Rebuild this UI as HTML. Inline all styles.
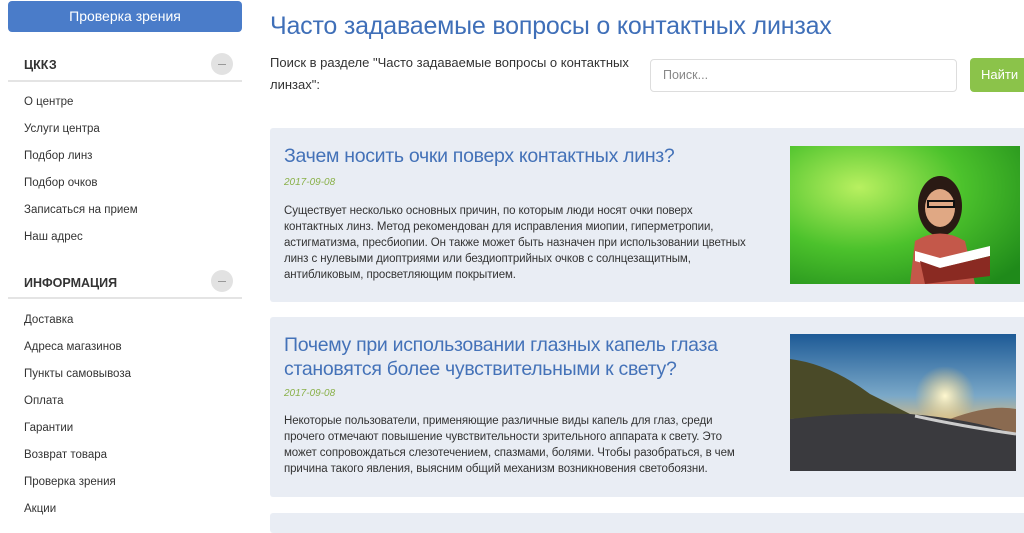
<!DOCTYPE html>
<html><head><meta charset="utf-8"><style>
*{margin:0;padding:0;box-sizing:border-box}
body{width:1024px;height:518px;overflow:hidden;background:#fff;font-family:"Liberation Sans",sans-serif;color:#333;position:relative}
.a{position:absolute;white-space:nowrap}
.btn{left:8px;top:1px;width:234px;height:31px;background:#4a7cc9;border-radius:4px;color:#fff;font-size:14px;text-align:center;line-height:30px}
.h{left:24px;font-size:12.5px;font-weight:bold;color:#333}
.c{width:22px;height:22px;border-radius:50%;background:#e2e2e2;left:211px}
.c:after{content:"";position:absolute;left:7px;top:10.5px;width:8px;height:1px;background:#999}
.ln{left:8px;width:234px;height:2px;background:#e4e4e4}
.it{left:24px;font-size:11.5px;color:#333}
.card{left:270px;width:760px;background:#e9edf4;border-radius:3px}
.t{font-size:19.5px;color:#4472b8;letter-spacing:-0.3px}
.d{font-size:10px;color:#8ab14a;font-style:italic}
.p{font-size:11.5px;line-height:16px;color:#333;letter-spacing:-0.1px}
</style></head><body>
<div class="a btn">Проверка зрения</div>
<div class="a h" style="top:58px">ЦККЗ</div>
<div class="a c" style="top:53px"></div>
<div class="a ln" style="top:80px"></div>
<div class="a it" style="top:96px">О центре</div>
<div class="a it" style="top:123px">Услуги центра</div>
<div class="a it" style="top:150px">Подбор линз</div>
<div class="a it" style="top:177px">Подбор очков</div>
<div class="a it" style="top:204px">Записаться на прием</div>
<div class="a it" style="top:231px">Наш адрес</div>
<div class="a h" style="top:276px">ИНФОРМАЦИЯ</div>
<div class="a c" style="top:270px"></div>
<div class="a ln" style="top:297px"></div>
<div class="a it" style="top:314px">Доставка</div>
<div class="a it" style="top:341px">Адреса магазинов</div>
<div class="a it" style="top:368px">Пункты самовывоза</div>
<div class="a it" style="top:395px">Оплата</div>
<div class="a it" style="top:422px">Гарантии</div>
<div class="a it" style="top:449px">Возврат товара</div>
<div class="a it" style="top:476px">Проверка зрения</div>
<div class="a it" style="top:503px">Акции</div>

<div class="a" style="left:270px;top:12px;font-size:25px;color:#3f6fb8;letter-spacing:-0.2px">Часто задаваемые вопросы о контактных линзах</div>
<div class="a" style="left:270px;top:52px;font-size:13px;line-height:22px;color:#333;white-space:normal;width:380px">Поиск в разделе "Часто задаваемые вопросы о контактных линзах":</div>
<div class="a" style="left:650px;top:59px;width:307px;height:33px;border:1px solid #ddd;border-radius:4px;font-size:12.5px;color:#888;padding:8px 12px">Поиск...</div>
<div class="a" style="left:970px;top:58px;width:60px;height:34px;background:#8bc34a;border-radius:4px;color:#fff;font-size:13px;line-height:33px;padding-left:11px">Найти</div>

<div class="a card" style="top:128px;height:174px"></div>
<div class="a t" style="left:284px;top:145px">Зачем носить очки поверх контактных линз?</div>
<div class="a d" style="left:284px;top:177px">2017-09-08</div>
<div class="a p" style="left:284px;top:203px">Существует несколько основных причин, по которым люди носят очки поверх<br>контактных линз. Метод рекомендован для исправления миопии, гиперметропии,<br>астигматизма, пресбиопии. Он также может быть назначен при использовании цветных<br>линз с нулевыми диоптриями или бездиоптрийных очков с солнцезащитным,<br>антибликовым, просветляющим покрытием.</div>
<svg class="a" style="left:790px;top:146px" width="230" height="138">
<defs><radialGradient id="g1" cx=".3" cy=".3" r=".9"><stop offset="0" stop-color="#b8f060"/><stop offset=".5" stop-color="#4cc22c"/><stop offset="1" stop-color="#1f8a1a"/></radialGradient></defs>
<rect width="230" height="138" fill="url(#g1)"/>
<ellipse cx="150" cy="60" rx="22" ry="30" fill="#2a1a14"/>
<ellipse cx="150" cy="62" rx="15" ry="19" fill="#e0a884"/>
<rect x="138" y="55" width="26" height="6" fill="none" stroke="#111" stroke-width="2"/>
<path d="M120 138 L125 95 Q150 80 175 95 L185 138Z" fill="#c4584a"/>
<path d="M125 105 L150 112 L200 100 L200 110 L150 122 L125 115Z" fill="#fff"/>
<path d="M130 115 L150 122 L200 110 L200 130 L135 138Z" fill="#8a2a22"/>
</svg>

<div class="a card" style="top:317px;height:180px"></div>
<div class="a t" style="left:284px;top:333px;line-height:24px">Почему при использовании глазных капель глаза<br>становятся более чувствительными к свету?</div>
<div class="a d" style="left:284px;top:388px">2017-09-08</div>
<div class="a p" style="left:284px;top:413px">Некоторые пользователи, применяющие различные виды капель для глаз, среди<br>прочего отмечают повышение чувствительности зрительного аппарата к свету. Это<br>может сопровождаться слезотечением, спазмами, болями. Чтобы разобраться, в чем<br>причина такого явления, выясним общий механизм возникновения светобоязни.</div>
<svg class="a" style="left:790px;top:334px" width="226" height="137">
<defs><linearGradient id="sk" x1="0" y1="0" x2="0" y2="1"><stop offset="0" stop-color="#1d5a96"/><stop offset=".45" stop-color="#7aa8c8"/><stop offset=".7" stop-color="#f0c070"/></linearGradient>
<radialGradient id="sun" cx=".5" cy=".5" r=".5"><stop offset="0" stop-color="#fff8d0"/><stop offset="1" stop-color="#ffd070" stop-opacity="0"/></radialGradient></defs>
<rect width="226" height="137" fill="url(#sk)"/>
<circle cx="155" cy="62" r="30" fill="url(#sun)"/>
<path d="M0 25 Q40 30 80 60 Q110 75 120 80 L0 85Z" fill="#4a4a28"/>
<path d="M160 85 Q200 70 226 75 L226 100 L160 95Z" fill="#8a6a50"/>
<path d="M0 85 Q60 78 120 80 Q180 85 226 100 L226 137 L0 137Z" fill="#3a3a3e"/>
<path d="M125 82 Q170 92 226 100" stroke="#ccc" stroke-width="3" fill="none"/>
</svg>

<div class="a card" style="top:513px;height:20px"></div>
</body></html>
